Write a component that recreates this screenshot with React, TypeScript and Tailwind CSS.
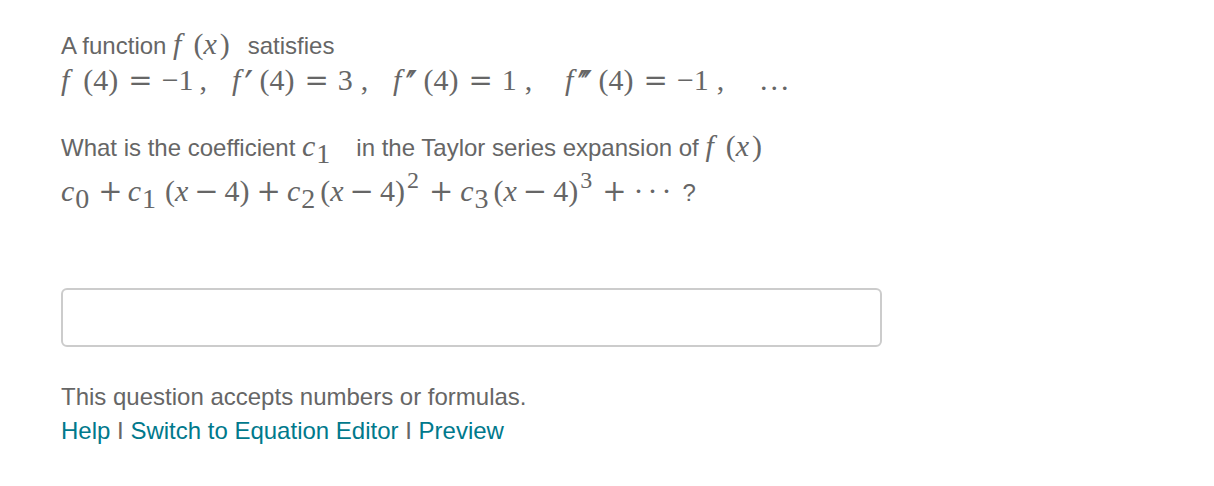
import React from 'react';

type P = { children: React.ReactNode; className?: string };

const M = ({ children }: P) => (
  <span className="font-['Liberation_Serif',serif] text-[30px]">{children}</span>
);
const I = ({ children, className = '' }: P) => <i className={className}>{children}</i>;
const Sub = ({ children }: P) => (
  <span className="relative top-[7px] text-[28px] not-italic">{children}</span>
);
const Sup = ({ children, className = '' }: P) => (
  <span className={`relative top-[-13px] text-[24px] ${className}`}>{children}</span>
);
const S = ({ children, className = '' }: P) => <span className={className}>{children}</span>;
// wide operator glyphs (=, +, −) closer to the TeX look
const Op = ({ children, className = '' }: P) => (
  <span className={`font-['DejaVu_Serif',serif] text-[29px] ${className}`}>{children}</span>
);
const Prime = ({ n }: { n: number }) => (
  <span className="relative top-[10px] ml-[1px] font-['DejaVu_Sans',sans-serif] text-[40px] leading-[0] tracking-[-6px]">
    {'′'.repeat(n)}
  </span>
);
const Fx = () => (
  <M>
    <I className="pr-[12px]">f</I>(<I className="pr-[3px]">x</I>)
  </M>
);

export default function App() {
  return (
    <div className="min-h-[486px] bg-white pl-[61px] pt-[27px] font-['Liberation_Sans',Arial,sans-serif] text-[24px] text-[#666666]">
      <div className="leading-[34px] whitespace-nowrap">
        A function <Fx />
        <span className="ml-[18px]">satisfies</span>
      </div>
      <div className="flex leading-[34px] whitespace-nowrap">
        <span className="w-[171px]">
          <M>
            <I className="pr-[14px]">f</I>(4)
            <Op className="ml-[10px] mr-[9px]">=</Op>−1
            <S className="ml-[6px]">,</S>
          </M>
        </span>
        <span className="w-[161px]">
          <M>
            <I className="pr-[3px]">f</I>
            <Prime n={1} />
            <S className="ml-[12px]">(4)</S>
            <Op className="ml-[10px] mr-[9px]">=</Op>3
            <S className="ml-[8px]">,</S>
          </M>
        </span>
        <span className="w-[172px]">
          <M>
            <I className="pr-[3px]">f</I>
            <Prime n={2} />
            <S className="ml-[12px]">(4)</S>
            <Op className="ml-[10px] mr-[9px]">=</Op>1
            <S className="ml-[8px]">,</S>
          </M>
        </span>
        <span className="w-[195px]">
          <M>
            <I className="pr-[3px]">f</I>
            <Prime n={3} />
            <S className="ml-[12px]">(4)</S>
            <Op className="ml-[10px] mr-[9px]">=</Op>−1
            <S className="ml-[8px]">,</S>
          </M>
        </span>
        <span>
          <M>
            <S className="tracking-[3px]">...</S>
          </M>
        </span>
      </div>

      <div className="mt-[27px] leading-[40px] whitespace-nowrap">
        What is the coefficient{' '}
        <M>
          <I className="pr-[1px]">c</I>
          <Sub>1</Sub>
        </M>
        <span className="ml-[26px]">in the Taylor series expansion of</span>{' '}
        <Fx />
      </div>
      <div className="mt-[3px] flex items-baseline leading-[40px] whitespace-nowrap">
        <M>
          <I className="pr-[1px]">c</I>
          <Sub>0</Sub>
          <Op className="ml-[9px] mr-[5px]">+</Op>
          <I className="pr-[1px]">c</I>
          <Sub>1</Sub>
          <S className="ml-[9px]">(</S>
          <I>x</I>
          <Op className="mx-[6px]">−</Op>4)
          <Op className="ml-[7px] mr-[6px]">+</Op>
          <I className="pr-[1px]">c</I>
          <Sub>2</Sub>
          <S className="ml-[5px]">(</S>
          <I>x</I>
          <Op className="mx-[6px]">−</Op>4)
          <Sup className="ml-[2px]">2</Sup>
          <Op className="ml-[10px] mr-[7px]">+</Op>
          <I className="pr-[1px]">c</I>
          <Sub>3</Sub>
          <S className="ml-[5px]">(</S>
          <I>x</I>
          <Op className="mx-[6px]">−</Op>4)
          <Sup className="ml-[2px]">3</Sup>
          <Op className="ml-[10px] mr-[7px]">+</Op>
          <S className="tracking-[4px]">···</S>
        </M>
        <span className="ml-[7px]">?</span>
      </div>

      <div className="mt-[75px] h-[59px] w-[821px] rounded-[6px] border-2 border-[#cccccc] bg-white" />

      <div className="mt-[33px] leading-[34px]">This question accepts numbers or formulas.</div>
      <div className="leading-[34px]">
        <a className="text-[#00798c]">Help</a> I{' '}
        <a className="text-[#00798c]">Switch to Equation Editor</a> I{' '}
        <a className="text-[#00798c]">Preview</a>
      </div>
    </div>
  );
}
